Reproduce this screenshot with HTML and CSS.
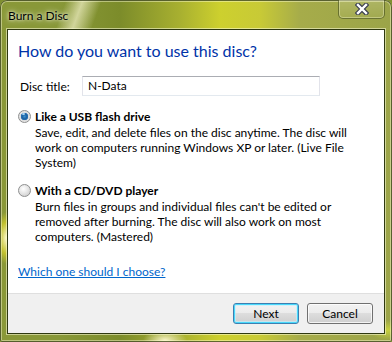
FILE: index.html
```html
<!DOCTYPE html>
<html>
<head>
<meta charset="utf-8">
<link rel="stylesheet" href="styles.css">
</head>
<body>
<div class="window">
  <div class="titlebar">
    <span class="title">Burn a Disc</span>
    <div class="close">
      <svg width="14" height="12" viewBox="0 0 14 12">
        <path d="M3 2 L11 10 M11 2 L3 10" stroke="#3a3e50" stroke-width="4.6" stroke-linecap="square"/>
        <path d="M3 2 L11 10 M11 2 L3 10" stroke="#ffffff" stroke-width="2.4" stroke-linecap="square"/>
      </svg>
    </div>
  </div>
  <div class="client">
    <div class="content">
      <div class="instruction">How do you want to use this disc?</div>
      <div class="title-row">
        <span class="label">Disc title:</span>
        <div class="textbox">N-Data</div>
      </div>
      <div class="option first">
        <div class="option-head"><span class="radio checked"></span><span class="option-label">Like a USB flash drive</span></div>
        <div class="desc">Save, edit, and delete files on the disc anytime. The disc will work on computers running Windows XP or later. (Live File System)</div>
      </div>
      <div class="option second">
        <div class="option-head"><span class="radio"></span><span class="option-label">With a CD/DVD player</span></div>
        <div class="desc">Burn files in groups and individual files can't be edited or removed after burning. The disc will also work on most computers. (Mastered)</div>
      </div>
      <a class="link" href="#">Which one should I choose?</a>
    </div>
    <div class="footer">
      <button class="btn default">Next</button>
      <button class="btn">Cancel</button>
    </div>
  </div>
</div>
</body>
</html>
```

FILE: styles.css
```css
html, body {
  margin: 0;
  padding: 0;
  background: #7f8f30;
}
body {
  width: 392px;
  height: 342px;
  overflow: hidden;
  font-family: "Segoe UI", Lato, "Open Sans", sans-serif;
  font-size: 12px;
  color: #000;
}
.window {
  box-sizing: border-box;
  width: 392px;
  height: 342px;
  display: flex;
  flex-direction: column;
  padding: 0 7px 8px 7px;
  border-radius: 7px 7px 2px 2px;
  box-shadow: inset 0 0 0 1px rgba(40, 50, 10, 0.7), inset 0 0 0 2px rgba(255, 255, 220, 0.45);
  background:
    radial-gradient(ellipse 10px 26px at 6px 238px, rgba(255, 250, 200, 0.95), rgba(230, 220, 40, 0.6) 60%, rgba(230, 220, 40, 0) 100%),
    radial-gradient(ellipse 22px 10px at 165px 340px, rgba(255, 250, 210, 0.9), rgba(255, 250, 210, 0) 100%),
    radial-gradient(ellipse 18px 10px at 388px 330px, rgba(210, 220, 60, 0.8), rgba(210, 220, 60, 0) 100%),
    linear-gradient(110deg, rgba(255,255,255,0) 62px, rgba(235, 235, 190, 0.75) 78px, rgba(255,255,255,0) 96px),
    linear-gradient(90deg, #8a9838 0px, #889838 60px, #7c8c2a 120px, #a8b030 180px, #cdd02e 220px, #c8ca36 260px, #a6ac4a 300px, #9ba448 392px);
  background-size: 100% 100%, 100% 100%, 100% 100%, 100% 30px, 100% 100%;
  background-repeat: no-repeat;
}
.titlebar {
  height: 29px;
  display: flex;
  align-items: flex-start;
  justify-content: space-between;
  flex-shrink: 0;
}
.title {
  margin: 8px 0 0 1px;
  line-height: 15px;
  font-size: 12px;
  color: #000;
  text-shadow: 0 0 6px rgba(255,255,240,0.9), 0 0 3px rgba(255,255,240,0.8);
}
.close {
  width: 47px;
  height: 19px;
  box-sizing: border-box;
  border: 1px solid rgba(60, 70, 20, 0.6);
  border-top: none;
  border-radius: 0 0 5px 5px;
  box-shadow: inset 0 0 0 1px rgba(255, 255, 220, 0.35);
  background: linear-gradient(180deg, rgba(255,255,230,0.18), rgba(255,255,230,0.05));
  display: flex;
  align-items: center;
  justify-content: center;
}
.close svg { display: block; }
.client {
  flex: 1;
  display: flex;
  flex-direction: column;
  background: #fff;
  border: 1px solid #2e3810;
  box-shadow: 0 0 0 1px rgba(255, 255, 220, 0.55);
}
.content {
  flex: 1;
  padding: 10px 10px 0 10px;
  display: flex;
  flex-direction: column;
  align-items: flex-start;
}
.instruction {
  font-size: 16px;
  line-height: 21px;
  color: #0033a8;
}
.title-row {
  margin-top: 15px;
  display: flex;
  align-items: center;
  height: 20px;
}
.label {
  margin-left: 2px;
  width: 62px;
}
.textbox {
  box-sizing: border-box;
  width: 238px;
  height: 20px;
  border: 1px solid #e2e3ea;
  border-top-color: #abadb3;
  border-bottom-color: #e3e9ef;
  padding: 0 0 0 5px;
  line-height: 18px;
}
.option { display: flex; flex-direction: column; }
.option.first { margin-top: 13px; }
.option.second { margin-top: 13px; }
.option-head {
  display: flex;
  align-items: center;
  height: 15px;
  line-height: 15px;
}
.option-label { font-weight: bold; margin-left: 4px; }
.radio {
  width: 13px;
  height: 13px;
  box-sizing: border-box;
  border-radius: 50%;
  border: 1px solid #8e8f8f;
  background: radial-gradient(circle at 40% 35%, #ffffff 0%, #e6e6e6 45%, #c4c4c4 100%);
  position: relative;
}
.radio.checked {
  background: radial-gradient(circle at 50% 50%, #3a8fd0 0, #1d5f9c 2.5px, #2a73b8 3.5px, #dcdcdc 4px, #f4f4f4 100%);
}
.radio.checked::after {
  content: "";
  position: absolute;
  left: 3px;
  top: 2px;
  width: 3px;
  height: 2px;
  border-radius: 50%;
  background: rgba(190, 230, 255, 0.9);
}
.desc {
  margin-top: 1px;
  margin-left: 17px;
  width: 320px;
  line-height: 15px;
}
.link {
  margin-top: 20px;
  line-height: 15px;
  color: #0066cc;
  text-decoration: underline;
}
.footer {
  flex-shrink: 0;
  box-sizing: border-box;
  height: 40px;
  border-top: 1px solid #dfdfdf;
  background: #f0f0f0;
  display: flex;
  justify-content: flex-end;
  align-items: flex-start;
  gap: 8px;
  padding: 9px 11px 0 0;
}
.btn {
  box-sizing: border-box;
  width: 66px;
  height: 21px;
  padding: 0;
  font-family: inherit;
  font-size: 12px;
  color: #000;
  border: 1px solid #707070;
  border-radius: 3px;
  background: linear-gradient(180deg, #f2f2f2 0%, #ebebeb 50%, #dddddd 50%, #cfcfcf 100%);
  box-shadow: inset 0 0 0 1px rgba(255,255,255,0.75);
}
.btn.default {
  border-color: #3c7fb1;
  box-shadow: inset 0 0 0 1px #48d8fb, inset 0 0 0 2px rgba(190, 240, 255, 0.6);
}
```
